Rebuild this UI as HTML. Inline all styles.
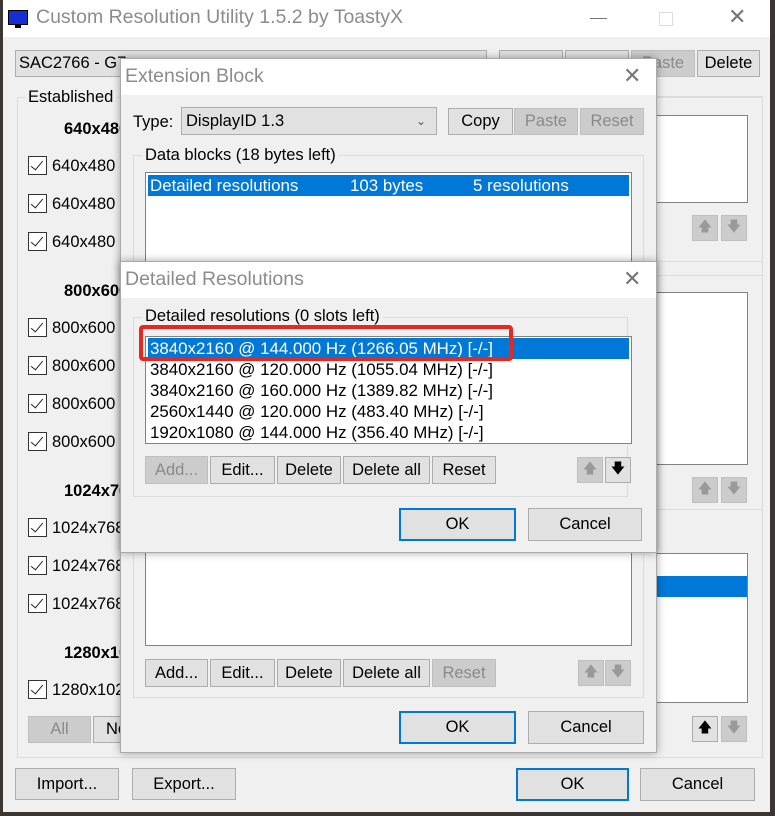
<!DOCTYPE html>
<html><head><meta charset="utf-8"><style>
*{box-sizing:border-box;margin:0;padding:0}
body{width:775px;height:816px;overflow:hidden;background:#3a3633;font-family:"Liberation Sans",sans-serif;font-size:16.5px;color:#000;position:relative}
.a{position:absolute}
.btn{position:absolute;background:#e1e1e1;border:1px solid #adadad;text-align:center;font-size:16.5px;display:flex;align-items:center;justify-content:center;color:#000}
.dis{background:#cccccc;border-color:#bfbfbf;color:#8a8a8a}
.def{border:2px solid #0078d7}
.white{position:absolute;background:#fff;border:1px solid #828282}
.grp{position:absolute;border:1px solid #dcdcdc}
.lbl{position:absolute;background:#f0f0f0;padding:0 3px;white-space:nowrap}
.cb{position:absolute;width:19px;height:19px;border:1px solid #333;background:#fff}
.cb:after{content:"";position:absolute;left:5px;top:1px;width:5px;height:11px;border:solid #222;border-width:0 1.5px 1.5px 0;transform:rotate(40deg)}
.t{position:absolute;white-space:nowrap}
.b{font-weight:bold}
.arr{position:absolute;width:26px;height:26px;background:#cccccc;border:1px solid #bfbfbf;color:#999;font-size:14px;display:flex;align-items:center;justify-content:center}
.arr.on{background:#e1e1e1;border-color:#adadad;color:#000}
.dlg{position:absolute;background:#f0f0f0;box-shadow:0 0 8px rgba(0,0,0,.35);border:1px solid #aaa}
.tb{position:absolute;left:0;top:0;right:0;height:36px;background:#fff}
.ttl{position:absolute;left:4px;top:6px;font-size:19.5px;color:#8c8c8c}
.x{position:absolute;font-size:22px;color:#777;font-weight:300}
.row{position:absolute;left:2px;right:2px;height:21px;padding-left:2px;line-height:21px;white-space:nowrap;font-size:16.9px}
.sel{background:#0078d7;color:#fff}
</style></head><body>
<div class="a" style="left:3px;top:0;width:767px;height:812px;background:#f0f0f0"></div>
<div class="a" style="left:3px;top:0;width:767px;height:37px;background:#fff"></div>
<div class="a" style="left:8px;top:10px;width:20px;height:15px;background:#1530d0;border:1px solid #000"></div>
<div class="a" style="left:15px;top:25px;width:6px;height:3px;background:#000"></div>
<div class="t" style="left:36px;top:6px;font-size:19.5px;color:#8c8c8c">Custom Resolution Utility 1.5.2 by ToastyX</div>
<div class="a" style="left:590px;top:18px;width:17px;height:1px;background:#777"></div>
<div class="a" style="left:659px;top:12px;width:14px;height:14px;border:1px solid #ddd"></div>
<div class="x" style="left:728px;top:4px">✕</div>
<div class="btn" style="left:15px;top:50px;width:472px;height:27px;justify-content:flex-start;padding-left:3px">SAC2766 - G7</div>
<div class="btn" style="left:499px;top:50px;width:64px;height:27px"></div>
<div class="btn" style="left:565px;top:50px;width:64px;height:27px"></div>
<div class="btn dis" style="left:631px;top:50px;width:64px;height:27px">Paste</div>
<div class="btn" style="left:697px;top:50px;width:63px;height:27px">Delete</div>
<div class="grp" style="left:17px;top:97px;width:746px;height:661px"></div>
<div class="lbl" style="left:25px;top:88px">Established</div>
<div class="t b" style="left:64px;top:120px">640x480</div>
<div class="cb" style="left:28px;top:156px"></div><div class="t" style="left:52px;top:157px">640x480</div>
<div class="cb" style="left:28px;top:194px"></div><div class="t" style="left:52px;top:195px">640x480</div>
<div class="cb" style="left:28px;top:232px"></div><div class="t" style="left:52px;top:233px">640x480</div>
<div class="t b" style="left:64px;top:282px">800x600</div>
<div class="cb" style="left:28px;top:318px"></div><div class="t" style="left:52px;top:319px">800x600</div>
<div class="cb" style="left:28px;top:356px"></div><div class="t" style="left:52px;top:357px">800x600</div>
<div class="cb" style="left:28px;top:394px"></div><div class="t" style="left:52px;top:395px">800x600</div>
<div class="cb" style="left:28px;top:432px"></div><div class="t" style="left:52px;top:433px">800x600</div>
<div class="t b" style="left:64px;top:482px">1024x768</div>
<div class="cb" style="left:28px;top:518px"></div><div class="t" style="left:52px;top:519px">1024x768</div>
<div class="cb" style="left:28px;top:556px"></div><div class="t" style="left:52px;top:557px">1024x768</div>
<div class="cb" style="left:28px;top:594px"></div><div class="t" style="left:52px;top:595px">1024x768</div>
<div class="t b" style="left:64px;top:644px">1280x1024</div>
<div class="cb" style="left:28px;top:680px"></div><div class="t" style="left:52px;top:681px">1280x1024</div>
<div class="btn dis" style="left:28px;top:716px;width:63px;height:27px">All</div>
<div class="btn" style="left:93px;top:716px;width:40px;height:27px;justify-content:flex-start;padding-left:12px">None</div>
<div class="grp" style="left:652px;top:96px;width:111px;height:166px"></div>
<div class="white" style="left:655px;top:115px;width:93px;height:88px"></div>
<div class="arr" style="left:692px;top:215px">🡅</div><div class="arr" style="left:721px;top:215px">🡇</div>
<div class="grp" style="left:652px;top:275px;width:111px;height:235px"></div>
<div class="white" style="left:655px;top:292px;width:93px;height:173px"></div>
<div class="arr" style="left:692px;top:477px">🡅</div><div class="arr" style="left:721px;top:477px">🡇</div>
<div class="white" style="left:640px;top:553px;width:108px;height:150px"></div>
<div class="a" style="left:641px;top:576px;width:106px;height:21px;background:#0078d7"></div>
<div class="arr on" style="left:692px;top:716px">🡅</div><div class="arr" style="left:721px;top:716px">🡇</div>
<div class="btn" style="left:15px;top:768px;width:104px;height:32px">Import...</div>
<div class="btn" style="left:132px;top:768px;width:104px;height:32px">Export...</div>
<div class="btn def" style="left:516px;top:768px;width:113px;height:33px">OK</div>
<div class="btn" style="left:640px;top:768px;width:115px;height:33px">Cancel</div>

<div class="dlg" style="left:120px;top:58px;width:537px;height:695px">
 <div class="tb"></div>
 <div class="ttl">Extension Block</div>
 <div class="x" style="left:502px;top:4px">✕</div>
 <div class="t" style="left:12px;top:54px">Type:</div>
 <div class="btn" style="left:60px;top:48px;width:256px;height:28px;justify-content:flex-start;padding-left:4px">DisplayID 1.3<span style="position:absolute;right:10px;font-size:12px;color:#555">&#8964;</span></div>
 <div class="btn" style="left:327px;top:49px;width:65px;height:27px">Copy</div>
 <div class="btn dis" style="left:393px;top:49px;width:64px;height:27px">Paste</div>
 <div class="btn dis" style="left:459px;top:49px;width:64px;height:27px">Reset</div>
 <div class="grp" style="left:12px;top:96px;width:511px;height:543px"></div>
 <div class="lbl" style="left:21px;top:87px">Data blocks (18 bytes left)</div>
 <div class="white" style="left:24px;top:113px;width:487px;height:474px">
  <div class="row sel" style="top:2px">Detailed resolutions<span style="position:absolute;left:202px">103 bytes</span><span style="position:absolute;left:325px">5 resolutions</span></div>
 </div>
 <div class="btn" style="left:24px;top:600px;width:63px;height:28px">Add...</div>
 <div class="btn" style="left:89px;top:600px;width:65px;height:28px">Edit...</div>
 <div class="btn" style="left:156px;top:600px;width:64px;height:28px">Delete</div>
 <div class="btn" style="left:222px;top:600px;width:87px;height:28px">Delete all</div>
 <div class="btn dis" style="left:311px;top:600px;width:64px;height:28px">Reset</div>
 <div class="arr" style="left:457px;top:601px">🡅</div><div class="arr" style="left:484px;top:601px">🡇</div>
 <div class="btn def" style="left:278px;top:652px;width:117px;height:33px">OK</div>
 <div class="btn" style="left:407px;top:652px;width:116px;height:33px">Cancel</div>
</div>

<div class="dlg" style="left:120px;top:261px;width:537px;height:292px">
 <div class="tb"></div>
 <div class="ttl">Detailed Resolutions</div>
 <div class="x" style="left:502px;top:4px">✕</div>
 <div class="grp" style="left:12px;top:55px;width:495px;height:180px"></div>
 <div class="lbl" style="left:21px;top:45px">Detailed resolutions (0 slots left)</div>
 <div class="white" style="left:24px;top:74px;width:487px;height:108px">
  <div class="row sel" style="top:1px">3840x2160 @ 144.000 Hz (1266.05 MHz) [-/-]</div>
  <div class="row" style="top:22px">3840x2160 @ 120.000 Hz (1055.04 MHz) [-/-]</div>
  <div class="row" style="top:43px">3840x2160 @ 160.000 Hz (1389.82 MHz) [-/-]</div>
  <div class="row" style="top:64px">2560x1440 @ 120.000 Hz (483.40 MHz) [-/-]</div>
  <div class="row" style="top:85px">1920x1080 @ 144.000 Hz (356.40 MHz) [-/-]</div>
 </div>
 <div class="a" style="left:18px;top:63px;width:374px;height:36px;border:4px solid #e8281e;border-radius:4px"></div>
 <div class="btn dis" style="left:24px;top:194px;width:63px;height:28px">Add...</div>
 <div class="btn" style="left:89px;top:194px;width:65px;height:28px">Edit...</div>
 <div class="btn" style="left:156px;top:194px;width:64px;height:28px">Delete</div>
 <div class="btn" style="left:222px;top:194px;width:87px;height:28px">Delete all</div>
 <div class="btn" style="left:311px;top:194px;width:64px;height:28px">Reset</div>
 <div class="arr" style="left:456px;top:195px">🡅</div><div class="arr on" style="left:484px;top:195px">🡇</div>
 <div class="btn def" style="left:278px;top:246px;width:117px;height:33px">OK</div>
 <div class="btn" style="left:407px;top:246px;width:114px;height:33px">Cancel</div>
</div>
</body></html>
